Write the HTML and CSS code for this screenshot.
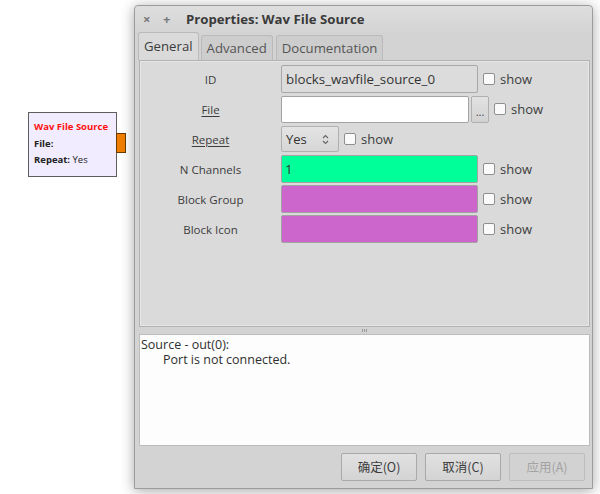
FILE: index.html
```html
<!DOCTYPE html>
<html>
<head>
<meta charset="utf-8">
<link rel="stylesheet" href="styles.css">
</head>
<body>
<div class="canvas">
  <div class="block">
    <div class="block-title">Wav File Source</div>
    <div class="block-param"><b>File:</b></div>
    <div class="block-param"><b>Repeat:</b> Yes</div>
    <div class="port"></div>
  </div>

  <div class="dialog">
    <div class="titlebar">
      <span class="tb-btn">×</span>
      <span class="tb-btn">+</span>
      <span class="tb-title">Properties: Wav File Source</span>
    </div>
    <div class="tabs">
      <div class="tab active">General</div>
      <div class="tab">Advanced</div>
      <div class="tab">Documentation</div>
    </div>
    <div class="page">
      <div class="form">
        <div class="label">ID</div>
        <div class="field">
          <div class="entry disabled w-full">blocks_wavfile_source_0</div>
          <label class="show"><span class="check"></span>show</label>
        </div>

        <div class="label"><u>File</u></div>
        <div class="field">
          <div class="entry white w-file"></div>
          <div class="dots">...</div>
          <label class="show"><span class="check"></span>show</label>
        </div>

        <div class="label"><u>Repeat</u></div>
        <div class="field">
          <div class="combo">Yes<span class="spin">
            <svg width="7" height="11" viewBox="0 0 7 11"><path d="M1 4 L3.5 1.5 L6 4" fill="none" stroke="#666" stroke-width="1.1"/><path d="M1 7 L3.5 9.5 L6 7" fill="none" stroke="#666" stroke-width="1.1"/></svg>
          </span></div>
          <label class="show"><span class="check"></span>show</label>
        </div>

        <div class="label">N Channels</div>
        <div class="field">
          <div class="entry green w-full">1</div>
          <label class="show"><span class="check"></span>show</label>
        </div>

        <div class="label">Block Group</div>
        <div class="field">
          <div class="entry magenta w-full"></div>
          <label class="show"><span class="check"></span>show</label>
        </div>

        <div class="label">Block Icon</div>
        <div class="field">
          <div class="entry magenta w-full"></div>
          <label class="show"><span class="check"></span>show</label>
        </div>
      </div>
    </div>
    <div class="handle"><span></span><span></span><span></span></div>
    <div class="textarea">
      <div class="line">Source - out(0):</div>
      <div class="line indent">Port is not connected.</div>
    </div>
    <div class="actions">
      <div class="btn">确定(O)</div>
      <div class="btn">取消(C)</div>
      <div class="btn disabled-btn">应用(A)</div>
    </div>
  </div>
</div>
</body>
</html>
```

FILE: styles.css
```css
* { box-sizing: border-box; }
html, body {
  margin: 0;
  padding: 0;
  background: #ffffff;
}
body {
  width: 600px;
  height: 494px;
  overflow: hidden;
  font-family: "Open Sans", "Noto Sans", "Noto Sans CJK SC", sans-serif;
  color: #3c3c3c;
}
.canvas {
  position: relative;
  width: 600px;
  height: 494px;
}

/* flowgraph block */
.block {
  position: absolute;
  left: 28px;
  top: 112px;
  width: 89px;
  height: 65px;
  background: #f1ecff;
  border: 1px solid #5e5e5e;
  padding: 6px 0 0 5px;
  font-family: "Open Sans", sans-serif;
  font-size: 9.5px;
  color: #222;
}
.block-title {
  color: #ff1010;
  font-weight: 700;
  height: 16px;
  line-height: 15px;
}
.block-param {
  height: 16px;
  line-height: 17px;
}
.block-param b { font-weight: 700; }
.port {
  position: absolute;
  left: 87px;
  top: 20px;
  width: 10px;
  height: 20px;
  background: #f07f00;
  border: 1px solid #6a3a00;
}

/* dialog window */
.dialog {
  position: absolute;
  left: 134px;
  top: 5px;
  width: 459px;
  height: 484px;
  background: #d3d3d3;
  border: 1px solid #9c9c9c;
  border-radius: 4px 4px 0 0;
  box-shadow: 0 2px 14px rgba(0, 0, 0, 0.35);
  display: flex;
  flex-direction: column;
  padding: 0 2px 0 3px;
}
.titlebar {
  height: 26px;
  display: flex;
  align-items: center;
  padding-left: 8px;
  background: linear-gradient(#dedede, #d4d4d4);
  margin: 0 -2px 0 -3px;
  border-radius: 4px 4px 0 0;
}
.tb-btn {
  color: #777;
  font-size: 13px;
  font-weight: 700;
  width: 20px;
}
.tb-title {
  margin-left: 3px;
  font-weight: 700;
  font-size: 13.2px;
  color: #3a3a3a;
}
.tabs {
  display: flex;
  align-items: flex-end;
  height: 28px;
  gap: 3px;
  padding-left: 0;
}
.tab {
  height: 25px;
  padding: 0 5px;
  font-size: 13.2px;
  line-height: 24px;
  background: #cdcdcd;
  border: 1px solid #bababa;
  border-bottom: none;
  border-radius: 3px 3px 0 0;
  color: #555;
}
.tab.active {
  height: 28px;
  line-height: 27px;
  background: #dadada;
  color: #3c3c3c;
  margin-right: -1px;
}
.page {
  height: 267px;
  background: #dadada;
  border: 1px solid #b2b2b2;
  box-shadow: inset 0 0 0 1px #e6e6e6;
  padding: 4px 0 0 0;
  margin-left: 1px;
}
.form {
  display: grid;
  grid-template-columns: 141px auto;
  grid-auto-rows: 28px;
  row-gap: 2px;
}
.label {
  display: flex;
  align-items: center;
  justify-content: center;
  font-size: 11.5px;
  color: #3c3c3c;
}
.label u { text-underline-offset: 2px; }
.field {
  display: flex;
  align-items: center;
}
.entry {
  height: 28px;
  border: 1px solid #a3a3a3;
  border-radius: 2px;
  font-size: 13.3px;
  line-height: 26px;
  padding-left: 4px;
  color: #333;
}
.entry.disabled { background: #dcdcdc; border-color: #a8a8a8; }
.entry.white { background: #ffffff; height: 27px; }
.entry.green { background: #00ff99; padding-left: 3px; }
.entry.magenta { background: #cc66cc; }
.w-full { width: 197px; }
.w-file { width: 188px; }
.dots {
  width: 18px;
  height: 27px;
  margin-left: 2px;
  border: 1px solid #b0b0b0;
  border-radius: 2px;
  background: linear-gradient(#e2e2e2, #d2d2d2);
  font-size: 11px;
  line-height: 30px;
  text-align: center;
  color: #444;
}
.show {
  display: flex;
  align-items: center;
  font-size: 13px;
  color: #3c3c3c;
  margin-left: 5px;
}
.check {
  width: 12px;
  height: 12px;
  border: 1px solid #8f8f8f;
  border-radius: 2px;
  background: #fafafa;
  margin-right: 5px;
}
.combo {
  width: 58px;
  height: 26px;
  border: 1px solid #b0b0b0;
  border-radius: 2px;
  background: linear-gradient(#e4e4e4, #d6d6d6);
  font-size: 13px;
  display: flex;
  align-items: center;
  justify-content: space-between;
  padding: 0 9px 0 4px;
  color: #333;
}
.spin { display: flex; align-items: center; }
.handle {
  height: 7px;
  display: flex;
  justify-content: center;
  align-items: center;
  gap: 1px;
}
.handle span {
  width: 1px;
  height: 3px;
  background: #9a9a9a;
}
.textarea {
  height: 112px;
  background: #fdfdfd;
  border: 1px solid #bdbdbd;
  margin-left: 1px;
  font-size: 12.5px;
  padding: 2px 0 0 1px;
  color: #2f2f2f;
}
.line {
  height: 15px;
  line-height: 15px;
}
.indent { padding-left: 22px; }
.actions {
  flex: 1;
  display: flex;
  justify-content: flex-end;
  align-items: flex-start;
  gap: 8px;
  padding: 7px 5px 0 0;
}
.btn {
  width: 76px;
  height: 28px;
  border: 1px solid #a9a9a9;
  border-radius: 2px;
  background: linear-gradient(#e1e1e1, #d4d4d4);
  font-family: "Noto Sans CJK SC", sans-serif;
  font-size: 12.5px;
  line-height: 26px;
  text-align: center;
  color: #3c3c3c;
}
.btn.disabled-btn {
  color: #a3a3a3;
  border-color: #bdbdbd;
  background: #d2d2d2;
}
```
